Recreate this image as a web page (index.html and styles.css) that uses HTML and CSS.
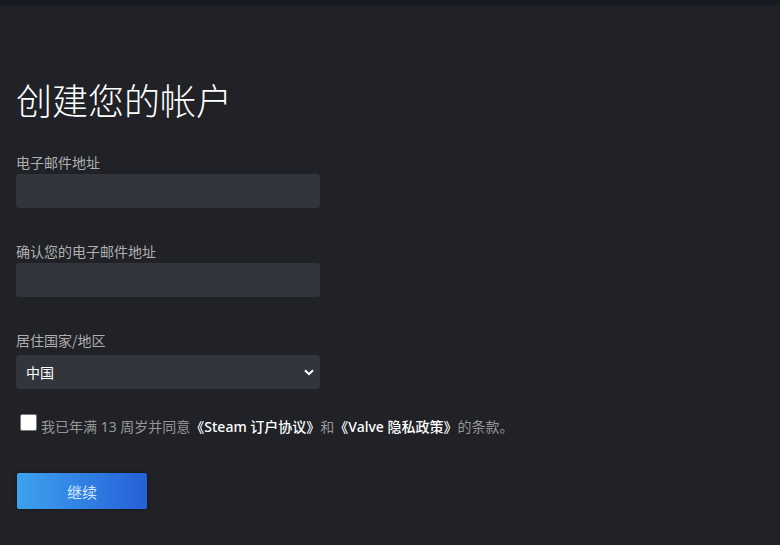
FILE: index.html
```html
<!DOCTYPE html>
<html lang="zh-CN">
<head>
<meta charset="utf-8">
<title>创建您的帐户</title>
<link rel="stylesheet" href="styles.css">
</head>
<body>
<div class="topbar"></div>
<main class="page">
  <h1 class="title">创建您的帐户</h1>
  <div class="field">
    <div class="label">电子邮件地址</div>
    <div class="input"></div>
  </div>
  <div class="field">
    <div class="label">确认您的电子邮件地址</div>
    <div class="input"></div>
  </div>
  <div class="field">
    <div class="label">居住国家/地区</div>
    <div class="input select">
      <span class="select-value">中国</span>
      <svg class="chevron" width="10" height="7" viewBox="0 0 10 7"><path d="M1 1.2 L5 5.2 L9 1.2" fill="none" stroke="#ffffff" stroke-width="2"/></svg>
    </div>
  </div>
  <div class="agree">
    <span class="checkbox"></span>
    <span class="agree-text">我已年满 13 周岁并同意<span class="link">《Steam 订户协议》</span>和<span class="link">《Valve 隐私政策》</span>的条款。</span>
  </div>
  <div class="actions">
    <button class="btn">继续</button>
  </div>
</main>
</body>
</html>
```
FILE: styles.css
```css
html, body {
  margin: 0;
  padding: 0;
}
body {
  background: #202227;
  font-family: "Noto Sans", "Noto Sans CJK SC", sans-serif;
  color: #afafaf;
  width: 780px;
  height: 545px;
  overflow: hidden;
}
.topbar {
  height: 5px;
  background: #171a21;
}
.page {
  padding: 0 16px;
}
.title {
  margin: 0;
  padding-top: 70px;
  font-family: "Noto Sans CJK SC", sans-serif;
  font-size: 36px;
  font-weight: 300;
  line-height: 48px;
  color: #ffffff;
}
.field {
  margin-top: 30px;
}
.field + .field {
  margin-top: 34px;
}
.label {
  font-family: "Noto Sans CJK SC", sans-serif;
  font-size: 14px;
  line-height: 18px;
  color: #afafaf;
}
.input {
  width: 304px;
  height: 34px;
  margin-top: 3px;
  background: #32353c;
  border-radius: 3px;
  box-sizing: border-box;
}
.select {
  display: flex;
  align-items: center;
  justify-content: space-between;
  margin-top: 6px;
  padding: 0 6px 0 10px;
}
.select-value {
  font-family: "Noto Sans CJK SC", sans-serif;
  font-size: 14px;
  color: #ffffff;
}
.chevron {
  display: block;
}
.agree {
  display: flex;
  align-items: flex-start;
  margin-top: 25px;
  padding-left: 4px;
}
.checkbox {
  width: 17px;
  height: 17px;
  box-sizing: border-box;
  background: #ffffff;
  border: 1px solid #7a7a7a;
  border-radius: 2px;
  flex: none;
}
.agree-text {
  margin-left: 4px;
  margin-top: 4px;
  font-size: 14px;
  line-height: 18px;
  color: #969696;
}
.link {
  color: #ffffff;
  font-weight: 500;
}
.actions {
  margin-top: 37px;
}
.btn {
  display: block;
  margin-left: 1px;
  width: 130px;
  height: 36px;
  border: none;
  border-radius: 2px;
  background: linear-gradient(90deg, #3da2ef 0%, #2560d8 100%);
  color: #cfe6fb;
  font-family: "Noto Sans CJK SC", sans-serif;
  font-size: 15px;
  box-shadow: 0 0 4px rgba(0,0,0,0.3);
  padding: 0;
}
```
